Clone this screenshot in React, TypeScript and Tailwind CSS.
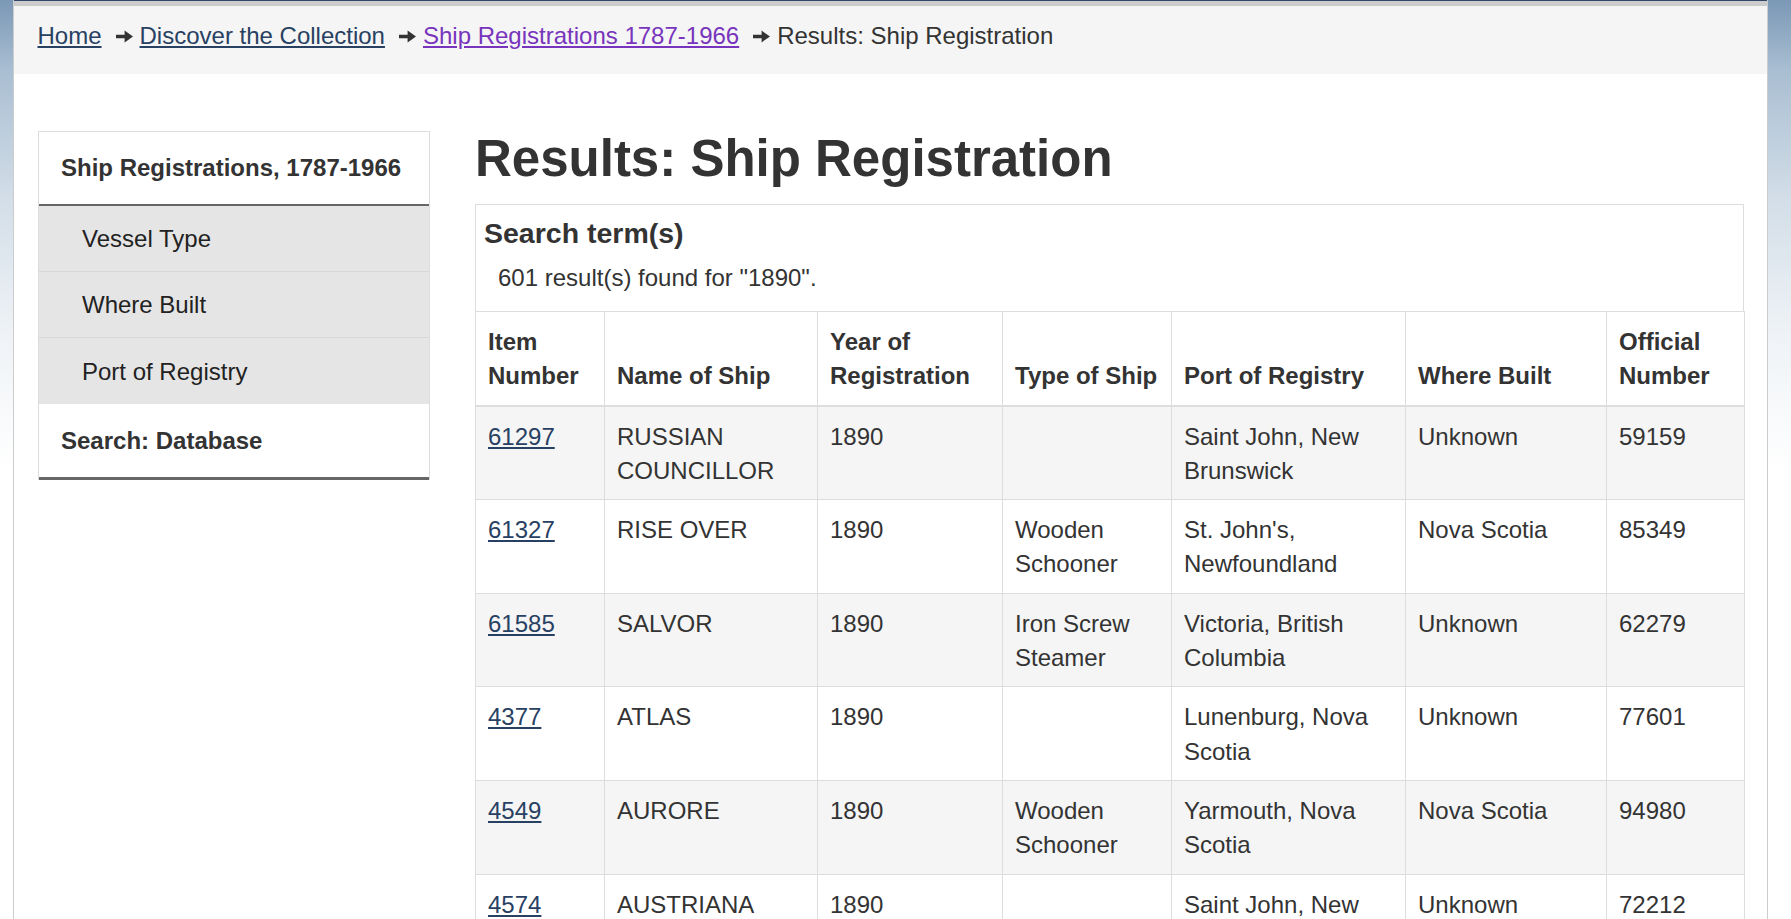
import React from "react";

function Arrow() {
  return (
    <svg
      width="17"
      height="13"
      viewBox="0 0 17 13"
      className="ml-[14px] mr-[7px] shrink-0"
      aria-hidden="true"
    >
      <path d="M0 4.8 H8.6 V0.6 L17 6.5 L8.6 12.4 V8.2 H0 Z" fill="#333333" />
    </svg>
  );
}

type Row = {
  item: string;
  name: string;
  year: string;
  type: string;
  port: string;
  built: string;
  official: string;
};

const rows: Row[] = [
  { item: "61297", name: "RUSSIAN COUNCILLOR", year: "1890", type: "", port: "Saint John, New Brunswick", built: "Unknown", official: "59159" },
  { item: "61327", name: "RISE OVER", year: "1890", type: "Wooden Schooner", port: "St. John's, Newfoundland", built: "Nova Scotia", official: "85349" },
  { item: "61585", name: "SALVOR", year: "1890", type: "Iron Screw Steamer", port: "Victoria, British Columbia", built: "Unknown", official: "62279" },
  { item: "4377", name: "ATLAS", year: "1890", type: "", port: "Lunenburg, Nova Scotia", built: "Unknown", official: "77601" },
  { item: "4549", name: "AURORE", year: "1890", type: "Wooden Schooner", port: "Yarmouth, Nova Scotia", built: "Nova Scotia", official: "94980" },
  { item: "4574", name: "AUSTRIANA", year: "1890", type: "", port: "Saint John, New Brunswick", built: "Unknown", official: "72212" },
];

const th = "border border-b-2 border-[#dddddd] px-[12px] pt-[13px] pb-[11px] text-left align-bottom font-bold";
const td = "border border-[#dddddd] px-[12px] pt-[13px] pb-[11px] align-top";

export default function App() {
  return (
    <div className="min-h-screen w-full overflow-hidden bg-[linear-gradient(180deg,#7b98b6_0px,#a9bed2_70px,#d3dee8_200px,#eef2f6_330px,#ffffff_470px)] font-['Liberation_Sans',Arial,sans-serif] text-[24px] leading-[34.29px] text-[#333333]">
      <div className="ml-[13px] min-h-screen w-[1755px] border-x border-[#cccccc] bg-white">
        {/* remnants of header */}
        <div className="h-[1px] bg-[#34476a]" />
        <div className="h-[5px] bg-[#cccccc]" />

        {/* breadcrumb */}
        <nav className="h-[68px] bg-[#f5f5f5] pl-[23.5px] pt-[13px]">
          <ol className="flex items-center whitespace-nowrap">
            <li>
              <a href="#" className="text-[#284162] underline">Home</a>
            </li>
            <li className="flex items-center">
              <Arrow />
              <a href="#" className="text-[#284162] underline">Discover the Collection</a>
            </li>
            <li className="flex items-center">
              <Arrow />
              <a href="#" className="text-[#7834bc] underline">Ship Registrations 1787-1966</a>
            </li>
            <li className="flex items-center">
              <Arrow />
              <span>Results: Ship Registration</span>
            </li>
          </ol>
        </nav>

        {/* main */}
        <div className="flex items-start gap-[45px] pl-[24px] pr-[23px] pt-[57px]">
          {/* sidebar */}
          <aside className="w-[392px] shrink-0 border-x border-t border-[#dddddd]">
            <div className="border-b-2 border-[#666666] pb-[19px] pl-[22px] pt-[19px] font-bold">
              Ship Registrations, 1787-1966
            </div>
            <ul className="bg-[#e5e5e5] text-[#222222]">
              <li className="flex h-[66px] items-center border-b border-[#d8d8d8] pl-[43px] pt-[1px]">Vessel Type</li>
              <li className="flex h-[66px] items-center border-b border-[#d8d8d8] pl-[43px] pt-[1px]">Where Built</li>
              <li className="flex h-[66px] items-center pl-[43px] pt-[1px]">Port of Registry</li>
            </ul>
            <div className="border-b-[3px] border-[#666666] pb-[18px] pl-[22px] pt-[20px] font-bold">
              Search: Database
            </div>
          </aside>

          {/* content */}
          <main className="w-[1269px] shrink-0">
            <h1 className="mb-[17px] text-[51px] font-bold leading-[56px] text-[#333333]">
              Results: Ship Registration
            </h1>

            <section className="border-x border-t border-[#dddddd] px-[8px] pb-[17px] pt-[13px]">
              <h2 className="text-[28.5px] font-bold leading-[31px]">Search term(s)</h2>
              <p className="mt-[12px] pl-[14px] leading-[33px]">601 result(s) found for "1890".</p>
            </section>

            <table className="w-[1269px] table-fixed border-collapse">
              <colgroup>
                <col className="w-[129px]" />
                <col className="w-[213px]" />
                <col className="w-[185px]" />
                <col className="w-[169px]" />
                <col className="w-[234px]" />
                <col className="w-[201px]" />
                <col className="w-[138px]" />
              </colgroup>
              <thead>
                <tr>
                  <th className={th}>Item Number</th>
                  <th className={th}>Name of Ship</th>
                  <th className={th}>Year of Registration</th>
                  <th className={th + " whitespace-nowrap"}>Type of Ship</th>
                  <th className={th}>Port of Registry</th>
                  <th className={th}>Where Built</th>
                  <th className={th}>Official Number</th>
                </tr>
              </thead>
              <tbody>
                {rows.map((r, i) => (
                  <tr key={r.item} className={i % 2 === 0 ? "bg-[#f5f5f5]" : "bg-white"}>
                    <td className={td}>
                      <a href="#" className="text-[#284162] underline">{r.item}</a>
                    </td>
                    <td className={td}>{r.name}</td>
                    <td className={td}>{r.year}</td>
                    <td className={td}>{r.type}</td>
                    <td className={td}>{r.port}</td>
                    <td className={td}>{r.built}</td>
                    <td className={td}>{r.official}</td>
                  </tr>
                ))}
              </tbody>
            </table>
          </main>
        </div>
      </div>
    </div>
  );
}
